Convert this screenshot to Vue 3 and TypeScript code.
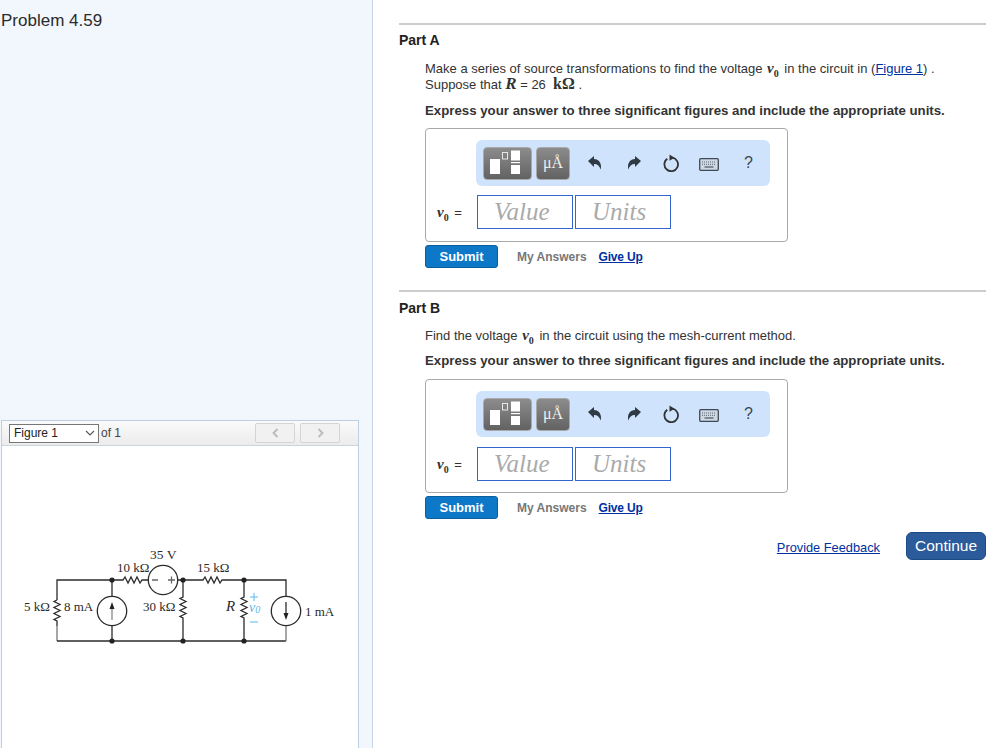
<script setup lang="ts">
interface Part {
  id: string;
  title: string;
}
const parts: Part[] = [
  { id: "a", title: "Part A" },
  { id: "b", title: "Part B" },
];
</script>

<template>
  <div class="page">
    <aside class="left">
      <h1 class="problem">Problem 4.59</h1>
      <section class="figure">
        <header class="fig-head">
          <div class="select">
            <span>Figure 1</span>
            <svg width="10" height="6" viewBox="0 0 10 6"><path d="M1 1l4 4 4-4" fill="none" stroke="#555" stroke-width="1.1" /></svg>
          </div>
          <span class="of">of 1</span>
          <div class="pager">
            <button class="page-btn"><svg width="7" height="10" viewBox="0 0 7 10"><path d="M5.5 1L1.5 5l4 4" fill="none" stroke="#bbb" stroke-width="1.8" /></svg></button>
            <button class="page-btn"><svg width="7" height="10" viewBox="0 0 7 10"><path d="M1.5 1l4 4-4 4" fill="none" stroke="#bbb" stroke-width="1.8" /></svg></button>
          </div>
        </header>
        <svg class="circuit" viewBox="2 446 356 302" width="356" height="302">
          <g fill="none" stroke="#2b2b2b" stroke-width="1.3">
            <path d="M57 600V580H123l2-3 3 6 3-6 3 6 3-6 3 6 2-3h6" />
            <path d="M178 580H203l2-3 3 6 3-6 3 6 3-6 3 6 2-3H286V596" />
            <path d="M57 600l-3 1.500 6 3-6 3 6 3-6 3 6 3-6 3 3 1.500V626" />
            <path d="M57 622V641" stroke="#777" />
            <path d="M57 641H286" />
            <path d="M286 626V641" stroke="#777" />
            <path d="M112 580V596M112 626V641" />
            <path d="M183 580V597l-3 1.500 6 3-6 3 6 3-6 3 6 3-6 3 3 1.500V641" />
            <path d="M244 580V597l-3 1.500 6 3-6 3 6 3-6 3 6 3-6 3 3 1.500V641" />
            <circle cx="163" cy="580" r="14.700" />
            <circle cx="112" cy="611" r="14.700" />
            <circle cx="286" cy="611" r="14.700" />
            <path d="M112 620V608" stroke="#888" />
            <path d="M286 602V614" />
            <path d="M152 580h6M168 580h7M171.500 576.500v7" stroke="#666" />
          </g>
          <path d="M112 602l-2.500 7h5zM286 620l-2.500-7h5z" fill="#222" />
          <g fill="#222">
            <circle cx="112" cy="580" r="2.600" />
            <circle cx="183" cy="580" r="2.600" />
            <circle cx="244" cy="580" r="2.600" />
            <circle cx="112" cy="641" r="2.600" />
            <circle cx="183" cy="641" r="2.600" />
            <circle cx="244" cy="641" r="2.600" />
          </g>
          <g class="ctext">
            <text x="150" y="559" class="lg">35 V</text>
            <text x="117" y="572">10 kΩ</text>
            <text x="197" y="572">15 kΩ</text>
            <text x="24" y="611">5 kΩ</text>
            <text x="64" y="611">8 mA</text>
            <text x="143" y="611">30 kΩ</text>
            <text x="226" y="611" class="it">R</text>
            <text x="305" y="616">1 mA</text>
          </g>
          <g class="ctext blue">
            <text x="249" y="612" class="it">v<tspan font-size="10" dy="1">0</tspan></text>
          </g>
          <path d="M250 597h8M254 593v8M250 622h8" stroke="#5bb8ee" stroke-width="1" fill="none" />
        </svg>
      </section>
    </aside>

    <main class="right">
      <section v-for="part in parts" :key="part.id" class="part" :class="part.id">
        <h2 class="part-title">{{ part.title }}</h2>
        <div class="body">
          <p v-if="part.id === 'a'" class="prompt">
            Make a series of source transformations to find the voltage <i class="math inline">v<sub>0</sub></i> in the circuit in (<a class="fig-link">Figure 1</a>) .<br />
            Suppose that <b class="math big">R</b> = 26 &nbsp;<b class="unit">kΩ</b> .
          </p>
          <p v-else class="prompt">
            Find the voltage <i class="math inline">v<sub>0</sub></i> in the circuit using the mesh-current method.
          </p>
          <p class="express">Express your answer to three significant figures and include the appropriate units.</p>
          <div class="answer">
            <div class="toolbar">
              <div class="tool tmpl">
                <svg width="49" height="33" viewBox="0 0 49 33">
                  <rect x="7" y="12" width="10" height="15" fill="#fff" />
                  <rect x="19.500" y="5.500" width="5" height="6.500" fill="none" stroke="#e8e8e8" />
                  <rect x="28" y="3.500" width="9" height="10" fill="#fff" />
                  <rect x="28" y="15" width="9" height="1.200" fill="#fff" />
                  <rect x="28" y="18" width="9" height="9" fill="#fff" />
                </svg>
              </div>
              <div class="tool units">μÅ</div>
              <svg class="ic undo" width="16" height="16" viewBox="0 0 16 16"><path d="M1 6l6-5v3c4 0 7 3 7 7.500 0 1-.1 2-.5 3-.7-3.500-3-5.500-6.500-5.500v3z" fill="#2f3a45" /></svg>
              <svg class="ic redo" width="16" height="16" viewBox="0 0 16 16"><path d="M15 6L9 1v3c-4 0-7 3-7 7.500 0 1 .1 2 .5 3C3.200 11 5.500 9 9 9v3z" fill="#2f3a45" /></svg>
              <svg class="ic reset" width="18" height="18" viewBox="0 0 18 18"><path d="M10.500 3.700a6.800 6.800 0 1 1-5.200 1.100" fill="none" stroke="#333" stroke-width="1.800" /><path d="M7.500 0.500l5 3.200-5 3z" fill="#333" /></svg>
              <svg class="ic kbd" width="20" height="13" viewBox="0 0 20 13">
                <rect x=".7" y=".7" width="18.600" height="11.600" rx="1" fill="#cfd8e2" stroke="#3d4a58" stroke-width="1.300" />
                <path d="M3 4h14M3 6.300h14" stroke="#5a6672" stroke-dasharray="1 1" />
                <path d="M5.500 9h9" stroke="#4c5864" stroke-width="1.200" />
              </svg>
              <span class="help">?</span>
            </div>
            <div class="inputs">
              <span class="label"><i class="math">v<sub>0</sub></i> =</span>
              <div class="field">Value</div>
              <div class="field">Units</div>
            </div>
          </div>
          <div class="actions">
            <button class="submit">Submit</button>
            <span class="my">My Answers</span>
            <a class="giveup">Give Up</a>
          </div>
        </div>
      </section>
      <footer class="foot">
        <a class="feedback">Provide Feedback</a>
        <button class="continue">Continue</button>
      </footer>
    </main>
  </div>
</template>

<style>
html, body { margin: 0; background: #fff; }
</style>

<style scoped>
.page {
  display: flex;
  width: 1002px;
  height: 748px;
  overflow: hidden;
  font-family: "Liberation Sans", Arial, sans-serif;
  color: #333;
  background: #fff;
}
.left {
  width: 372px;
  height: 748px;
  flex: none;
  background: #f2f7fd;
  border-right: 1px solid #c5d5e6;
  display: flex;
  flex-direction: column;
}
.problem {
  margin: 0;
  padding: 12px 0 0 1px;
  height: 408px;
  font-size: 17px;
  line-height: 18px;
  font-weight: 400;
  color: #2b2b2b;
  flex: none;
}
.figure {
  width: 356px;
  margin-left: 1px;
  flex: 1;
  border: 1px solid #bdd0e2;
  border-bottom: 0;
  background: #fff;
}
.fig-head {
  height: 24px;
  display: flex;
  align-items: center;
  padding-left: 7px;
  background: linear-gradient(#fafafa, #ececec);
  border-bottom: 1px solid #c9d4de;
}
.select {
  height: 17px;
  border: 1px solid #777;
  background: #fff;
  display: flex;
  align-items: center;
  justify-content: space-between;
  padding: 0 3px 0 4px;
  width: 81px;
  font-size: 12px;
  color: #222;
}
.of {
  margin-left: 2px;
  font-size: 12px;
  color: #444;
}
.pager {
  margin-left: auto;
  margin-right: 18px;
  display: flex;
  gap: 5px;
}
.page-btn {
  width: 40px;
  height: 20px;
  padding: 0;
  border: 1px solid #d4d4d4;
  border-radius: 2px;
  background: #f1f1f1;
  display: flex;
  align-items: center;
  justify-content: center;
}
.circuit { display: block; }
.ctext text {
  font-family: "Liberation Serif", "Times New Roman", serif;
  font-size: 13px;
  fill: #2b2b2b;
}
.ctext .lg { font-size: 13.500px; }
.ctext .it { font-style: italic; font-size: 15px; }
.ctext.blue text { fill: #5bb8ee; font-size: 14px; }
.right {
  flex: 1;
  padding: 23px 16px 0 26px;
  min-width: 0;
}
.part {
  border-top: 2px solid #ccc;
}
.part.a { height: 265px; }
.part.b { height: 239px; }
.part-title {
  margin: 7px 0 0;
  font-size: 14px;
  line-height: 16px;
  font-weight: 700;
  color: #222;
}
.part.b .part-title { margin-top: 8px; }
.body { padding-left: 26px; }
.prompt {
  margin: 13px 0 0;
  font-size: 13px;
  line-height: 16px;
  color: #333;
}
.part.b .prompt { margin-top: 12px; }
.math {
  font-family: "Liberation Serif", "Times New Roman", serif;
  font-style: italic;
  font-weight: 700;
  font-size: 15px;
  line-height: 0;
}
.math.inline { margin: 0 2px 0 1px; }
.math sub { font-size: 10px; font-style: normal; line-height: 0; }
.big { font-size: 17px; }
.unit {
  font-family: "Liberation Serif", "Times New Roman", serif;
  font-size: 16px;
  line-height: 0;
}
.fig-link { color: #00309f; text-decoration: underline; }
.express {
  margin: 10px 0 0;
  font-size: 13.250px;
  line-height: 16px;
  font-weight: 700;
  color: #333;
}
.part.b .express { margin-top: 9px; }
.answer {
  margin-top: 9px;
  width: 311px;
  height: 101px;
  border: 1px solid #aaa;
  border-radius: 4px;
  padding: 11px 0 0 50px;
}
.part.b .answer { margin-top: 10px; }
.toolbar {
  width: 294px;
  height: 46px;
  background: #cfe4fc;
  border-radius: 6px;
  display: flex;
  align-items: center;
  padding-left: 7px;
  box-sizing: border-box;
}
.tool {
  height: 33px;
  border: 1px solid #a9a9a9;
  border-radius: 4px;
  background: linear-gradient(#8c8c8c, #626262);
  box-sizing: border-box;
  display: flex;
  align-items: center;
  justify-content: center;
  color: #fff;
}
.tmpl { width: 49px; }
.tmpl svg { flex: none; }
.units {
  width: 34px;
  margin-left: 4px;
  font-family: "Liberation Serif", "Times New Roman", serif;
  font-size: 16px;
  color: #eee;
}
.ic { flex: none; }
.undo { margin-left: 17px; }
.redo { margin-left: 23px; }
.reset { margin-left: 20px; }
.kbd { margin-left: 19px; margin-top: 2px; }
.help {
  margin-left: 25px;
  font-size: 16px;
  color: #3c4650;
}
.inputs {
  margin-top: 9px;
  padding-left: 1px;
  display: flex;
  align-items: center;
  position: relative;
}
.part.b .inputs { margin-top: 10px; }
.label {
  position: absolute;
  left: -39px;
  font-size: 13px;
  color: #333;
  word-spacing: 2px;
}
.field {
  width: 96px;
  height: 34px;
  border: 1px solid #3366cc;
  box-sizing: border-box;
  font-family: "Liberation Serif", "Times New Roman", serif;
  font-style: italic;
  font-size: 25px;
  line-height: 31px;
  color: #aaa;
  padding-left: 16px;
}
.field + .field { margin-left: 2px; }
.actions {
  margin-top: 3px;
  display: flex;
  align-items: center;
  height: 23px;
}
.submit {
  width: 73px;
  height: 23px;
  padding: 0;
  background: #0e78c8;
  border: 1px solid #0b5f9e;
  border-radius: 3px;
  color: #fff;
  font: 700 13px "Liberation Sans", Arial, sans-serif;
}
.my {
  margin-left: 19px;
  font-size: 12px;
  font-weight: 700;
  color: #777;
}
.giveup {
  margin-left: 12px;
  font-size: 12px;
  letter-spacing: -0.2px;
  font-weight: 700;
  color: #00309f;
  text-decoration: underline;
}
.foot {
  display: flex;
  align-items: center;
  justify-content: flex-end;
  height: 28px;
  margin-top: 1px;
}
.feedback {
  font-size: 12.800px;
  color: #00309f;
  text-decoration: underline;
  margin-right: 26px;
  margin-top: 2px;
}
.continue {
  width: 80px;
  height: 28px;
  padding: 0;
  background: #2b5b9b;
  border: 1px solid #1d4a85;
  border-radius: 6px;
  color: #fff;
  font: 400 15.500px "Liberation Sans", Arial, sans-serif;
}
</style>
